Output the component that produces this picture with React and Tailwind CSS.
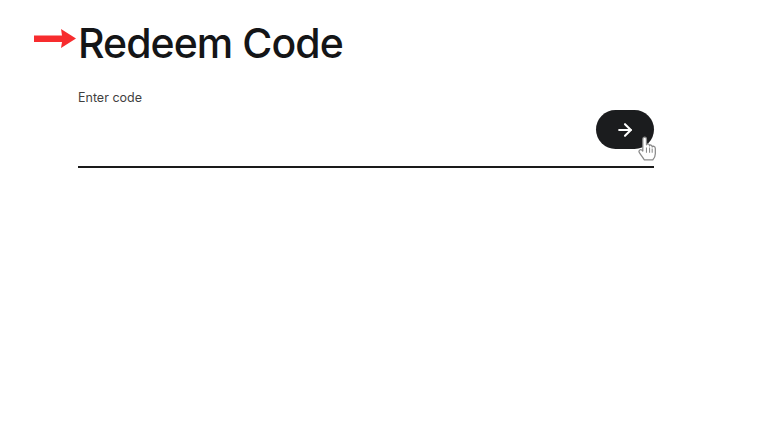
import { ArrowRight } from "lucide-react";

function RedArrow() {
  return (
    <svg className="absolute left-[-44px] top-[12px]" width="42" height="22" viewBox="0 0 42 22">
      <path d="M0 7.5 H28 L27 1 L42 10.5 L27 20 L28 14 H0 Z" fill="#f72c2e" />
    </svg>
  );
}

function HandCursor() {
  return (
    <svg className="absolute right-[-3px] bottom-[-12px]" width="19" height="25" viewBox="0 0 18 24">
      <path
        d="M4.5 12 V3 C4.5 0.5 8 0.5 8 3 V8.5 C8.5 7 11 7.5 11 9.5 C11.5 8 13.5 8.5 13.5 10.5 C14 9.5 16.5 9.5 16.5 12 V17 C16.5 20 15 22 14 23 H6 C5 21 3 19 1.2 16 C0 14 2.5 11.5 4.5 14.5 Z"
        fill="#fff"
        stroke="#8a8a8a"
        strokeWidth="1.2"
        strokeLinejoin="round"
      />
      <path d="M8 11 V16 M11 11 V16 M13.5 12 V16" stroke="#8a8a8a" strokeWidth="1" />
    </svg>
  );
}

export default function App() {
  return (
    <div className="min-h-[432px] bg-white pt-[16px] pl-[78px] pr-[114px] font-['Inter','Liberation_Sans',sans-serif]">
      <div className="relative">
        <RedArrow />
        <h1 className="text-[41px] leading-[54px] font-[450] tracking-[-0.95px] text-[#141517]">
          Redeem Code
        </h1>
      </div>
      <div className="mt-[20px] border-b-2 border-[#1a1a1a] h-[78px] relative">
        <label className="block text-[12.5px] leading-[16px] text-[#3f3f3f]">Enter code</label>
        <div className="flex justify-end mt-[4px]">
          <button className="relative flex items-center justify-center w-[58px] h-[39px] rounded-full bg-[#1b1c1e]">
            <ArrowRight className="w-[20px] h-[20px] text-white" strokeWidth={2.5} />
            <HandCursor />
          </button>
        </div>
      </div>
    </div>
  );
}
